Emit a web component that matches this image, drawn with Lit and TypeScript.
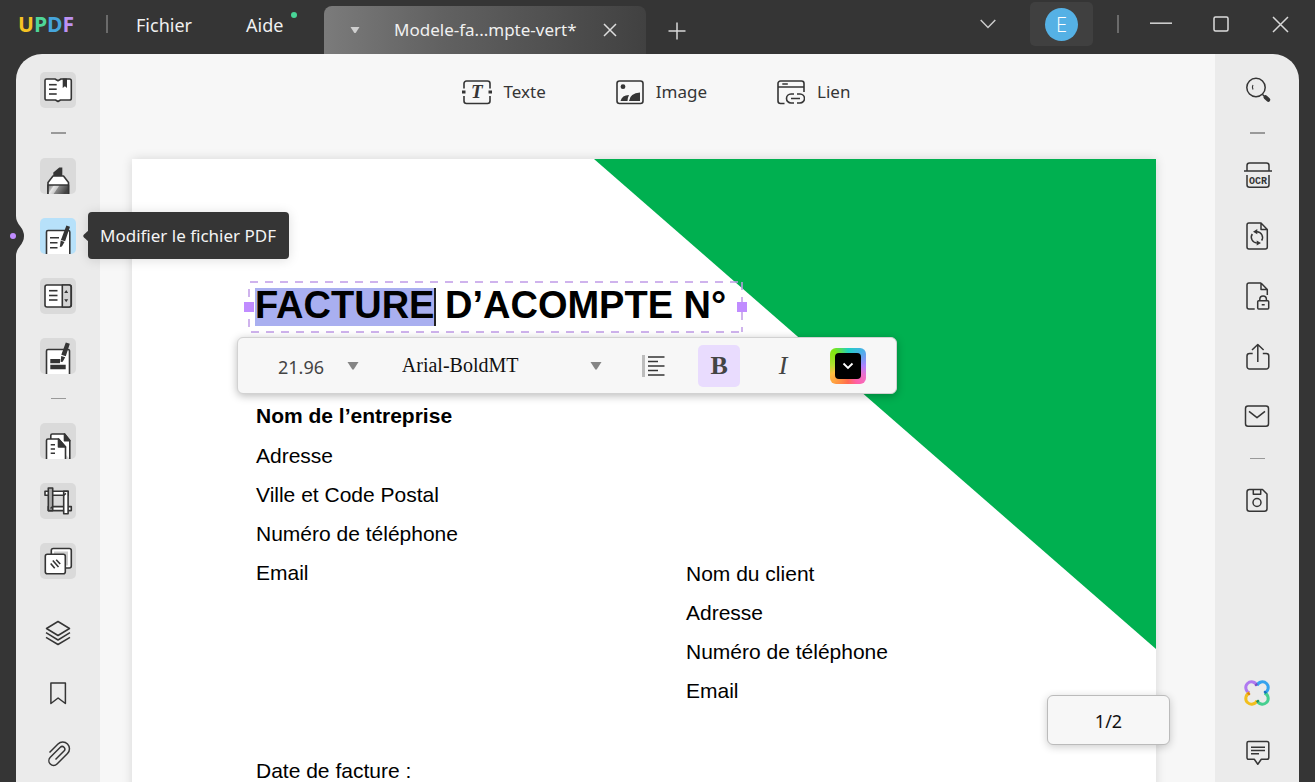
import { LitElement, html, css, svg, SVGTemplateResult, TemplateResult } from "lit";
import { customElement, property } from "lit/decorators.js";
import { classMap } from "lit/directives/class-map.js";

const pageLines = (x2: number, ys: number[], x1 = 9) =>
  ys.map((y) => svg`<path d="M${x1} ${y}H${x2}" />`);

const icons: Record<string, SVGTemplateResult> = {
  reader: svg`
    <path fill="#fff" d="M6.500 7H15l3 1.800L21 7h8.500a1.800 1.800 0 0 1 1.800 1.800v17.400A1.800 1.800 0 0 1 29.500 28H20.500L18 29.500 15.500 28H6.500a1.500 1.500 0 0 1-1.500-1.500v-18A1.500 1.500 0 0 1 6.500 7z" />
    <path fill="currentColor" stroke="none" d="M22.700 6.500h4.300v9.500l-2.100-1.800-2.200 1.800z" />
    ${pageLines(16.7, [12.7, 17.2, 22])}`,
  highlight: svg`
    <defs><linearGradient id="pen-body" x1="0" y1="0" x2="1" y2=".3">
      <stop offset="0" stop-color="#777" /><stop offset=".25" stop-color="#bbb" />
      <stop offset=".3" stop-color="#e8e8e8" /><stop offset=".5" stop-color="#ccc" />
      <stop offset=".55" stop-color="#888" /><stop offset="1" stop-color="#444" />
    </linearGradient></defs>
    <path fill="#fff" d="M8 36V24.500l5-6.500h10.500l5 6.500V36" />
    <path fill="url(#pen-body)" d="M8 36v-9h20.500v9" />
    <path fill="currentColor" stroke="none" d="M13.300 18v-3.500L19.300 9.500h3V18z" />`,
  edit: svg`
    <path fill="#fff" d="M6.500 36V14A1.500 1.500 0 0 1 8 12.500h20.300a1.500 1.500 0 0 1 1.500 1.500v22" />
    <path d="M10 19.700h9M10 24.700h7.500M10 29.700h7.500" />
    <path fill="currentColor" stroke="none" d="M26.400 7.600l3.600 1.100-4.900 14.600-4.200-1.400zM20.700 22.600l3.800 1.300-2.600 4.700-2.100.4z" />`,
  form: svg`
    <rect x="5" y="7" width="26.300" height="22" rx="2" fill="#fff" />
    <path fill="#d4d4d4" d="M22.300 7H29a2 2 0 0 1 2 2v18a2 2 0 0 1-2 2h-6.700z" />
    ${pageLines(17.5, [12.7, 17.5, 22])}
    <path fill="currentColor" stroke="none" d="M24.200 15l2-3 2 3zM24.200 21.300l2 3 2-3z" />`,
  redact: svg`
    <path fill="#fff" d="M6.500 36V13A1.500 1.500 0 0 1 8 11.500h20a1.500 1.500 0 0 1 1.500 1.500v23" />
    <path fill="currentColor" stroke="none" d="M10.300 21h10l-.4 4.300h-9.600zM10.300 26.800h15.400v4.500H10.300zM25.800 4.500l4 1.300-4 12.500-4.500-1.500zM21.200 18l4 1.300-2.500 4.500-2 .2z" />`,
  pages: svg`
    <path fill="#fff" d="M10.800 16v-3.500a1.500 1.500 0 0 1 1.500-1.500H24.500l5.300 6.500V36" />
    <path fill="currentColor" d="M24.500 11l5.300 6.700h-5.300z" />
    <path fill="#fff" d="M6.500 36V17.500A1.500 1.500 0 0 1 8 16h10.500l7 8v12" />
    <path fill="currentColor" d="M18.500 16l7 8h-7z" />
    <path d="M10.700 21.700H15M10.700 26H15M10.700 30.300H15" />`,
  crop: svg`
    <path fill="#fff" d="M5 8.300h23.200v3.900H5zM8.300 23.600h23v4h-23z" />
    <path fill="#aaa" d="M8.300 5h4.400v22.600H8.300z" />
    <path fill="#fff" d="M23.700 8.300h4.400v22.400h-4.400z" />
    <path d="M10.500 25.500l2.200-2M23.500 12.300l2.400-2" />`,
  background: svg`
    <rect x="11.300" y="5.500" width="20" height="19.500" rx="2" fill="#fff" />
    <rect x="14" y="8.500" width="14" height="14" fill="#ccc" stroke="none" />
    <rect x="5.300" y="11.300" width="20" height="19.500" rx="2" fill="#fff" />
    <path d="M10.700 20.500l4 4.700M12.800 17.500l5.700 6.500M16.200 16.700l4 4.300" />`,
  layers: svg`
    <path d="M18 6.500l11.500 7-11.500 7-11.500-7zM6 17.700L18 25l12-7.300M6 22.300l12 7.200 12-7.200" />`,
  bookmark: svg`<path d="M10.900 7.900h14.500v20.600L18.100 23l-7.200 5.500z" />`,
  attach: svg`
    <path d="M9.500 17.500l8.500-8.500a6.700 6.700 0 0 1 9.500 9.500L17 29a4.700 4.700 0 0 1-6.700-6.700l10-10a2.600 2.600 0 0 1 3.700 3.700l-8.500 8.500" />`,
  search: svg`
    <circle cx="17" cy="15.500" r="9.200" />
    <path stroke-width="1.200" d="M14 13q-1.300 2 0 4.500" />
    <path d="M23.500 22.500l3 2.700" />
    <path stroke-width="4" stroke-linecap="round" d="M26.500 25.200l2.800 2.600" />`,
  ocr: svg`
    <path d="M8 12.700V7.500a2.500 2.500 0 0 1 2.500-2.500h17a2.500 2.500 0 0 1 2.500 2.500v5.200M5 12.900h28M8 17v9.700a2.500 2.500 0 0 0 2.500 2.500h17a2.500 2.500 0 0 0 2.500-2.500V17" />
    <text class="glyph ocr" x="19" y="26" text-anchor="middle">OCR</text>`,
  convert: svg`
    <path d="M22 5H10a2 2 0 0 0-2 2v22a2 2 0 0 0 2 2h16.300a2 2 0 0 0 2-2V11.500zM22 5v6.500h6.300" />
    <path d="M18 13.700a5.700 5.700 0 0 1 4.600 8.800M13.300 16a5.700 5.700 0 0 0 4.500 8.900" />
    <path fill="currentColor" stroke="none" d="M14 13.700l4.300-2.600v5.200zM22 25l-4.300-2.600v5.200z" />`,
  protect: svg`
    <path d="M22 5H10a2 2 0 0 0-2 2v22a2 2 0 0 0 2 2h5.700M22 5v6.500h6.300M22 5l6.300 6.500V17" />
    <rect x="18.700" y="22.700" width="11" height="8.300" rx="1" />
    <path d="M20.800 22.700v-1.500a3.300 3.300 0 0 1 6.600 0v1.500M22.700 26.700h3" />`,
  share: svg`
    <path d="M13.700 15.500H10.500A2.500 2.500 0 0 0 8 18v10.500a2.500 2.500 0 0 0 2.500 2.500H27.300a2.500 2.500 0 0 0 2.500-2.500V18a2.500 2.500 0 0 0-2.500-2.500h-3.500M18.800 24V7M13 12l5.800-5.500 5.800 5.500" />`,
  mail: svg`
    <rect x="6.500" y="8" width="23" height="20.300" rx="2.500" />
    <path d="M10 13.300l8 6.400 8-6.400" />`,
  save: svg`
    <path d="M10.500 6.500H23.500L28 11v14.800a2.500 2.500 0 0 1-2.500 2.500h-15A2.500 2.500 0 0 1 8 25.800V9a2.500 2.500 0 0 1 2.500-2.500zM14.300 6.500v4.800h7.400V6.500" />
    <circle cx="18" cy="19.500" r="4" />`,
  assistant: svg`
    <g stroke-width="3">
      <path stroke="#b07af0" d="M18 10.500A5.800 5.800 0 1 0 10.500 18" />
      <path stroke="#36a3ee" d="M25.500 18A5.800 5.800 0 1 0 18 10.500" />
      <path stroke="#46cf90" d="M18 25.500A5.800 5.800 0 1 0 25.500 18" />
      <path stroke="#f2bf1e" d="M10.500 18A5.800 5.800 0 1 0 18 25.500" />
      <path stroke="#7b4fc0" d="M16.500 9l1.500 1.500" /><path stroke="#1670c0" d="M27 16.500l-1.500 1.500" />
      <path stroke="#209060" d="M19.500 27l-1.500-1.500" /><path stroke="#dd8010" d="M9 19.500l1.500-1.500" />
    </g>`,
  comment: svg`
    <path d="M9.500 6.500H28a1.800 1.800 0 0 1 1.800 1.800v14.200a1.800 1.800 0 0 1-1.800 1.800h-5.700l-3.500 5-3.500-5H9.500a1.500 1.500 0 0 1-1.500-1.500V8a1.500 1.500 0 0 1 1.500-1.500zM12 12.300h14M12 15.500h14M12 18.700h8" />`,
};

const railIcon = (name: string) => html`
  <svg class="icon" viewBox="0 0 36 36" width="36" height="36" aria-hidden="true">${icons[name]}</svg>`;

interface Tool { icon: string; label: string; }
const BREAK = "break";
type Entry = Tool | typeof BREAK | "thin";

@customElement("tool-rail")
export class ToolRail extends LitElement {
  @property({ attribute: false }) entries: Entry[] = [];
  @property({ attribute: false }) footer: Tool[] = [];
  @property({ type: Boolean }) filled = false;
  @property() active = "";

  static styles = css`
    :host { display: flex; flex-direction: column; justify-content: space-between; align-items: center;
      padding: 18px 0 11px; background: #ebebeb; box-sizing: border-box; }
    .group { display: flex; flex-direction: column; align-items: center; gap: 24px; }
    .tool { position: relative; width: 36px; height: 36px; padding: 0; border: 0; border-radius: 5px;
      background: none; color: #353535; }
    .filled { background: #dadada; }
    .filled .icon { stroke-width: 1.600; }
    .active { background: #b7e1fa; }
    .icon { display: block; fill: none; stroke: currentColor; stroke-width: 1.500; stroke-linejoin: round; }
    .glyph { fill: currentColor; stroke: none; }
    .ocr { font: 700 10px "Liberation Mono", monospace; }
    .rule { width: 15px; height: 2px; margin: 0; border: 0; background: #999; }
    .thin { height: 1px; }
    .tip { position: absolute; z-index: 5; left: 48px; top: -6px; height: 47px; padding: 1px 13px 0 12px;
      box-sizing: border-box; display: flex; align-items: center; border-radius: 4px; background: #353535; color: #f4f4f4;
      font: 17px/24px "Noto Sans", sans-serif; white-space: nowrap; box-shadow: 0 1px 12px #0002; }
    .arrow { position: absolute; left: -5px; top: 18px; }
    .notch { position: absolute; left: -32px; top: -2px; }
  `;

  private tool(t: Tool): TemplateResult {
    const on = t.icon === this.active;
    return html`<button class=${classMap({ tool: true, filled: this.filled && this.entries.includes(t), active: on })}
      aria-label=${t.label}>
      ${railIcon(t.icon)}
      ${on ? html`
        <svg class="notch" width="16" height="40" viewBox="0 0 16 40" aria-hidden="true">
          <path fill="#353535" d="M0 0h8q0 5 4 10 4 5 4 10t-4 10q-4 5-4 10H0z" />
          <circle cx="5" cy="20" r="3" fill="#c08cff" /></svg>
        <span class="tip" role="tooltip">
          <svg class="arrow" width="6" height="12" viewBox="0 0 6 12" aria-hidden="true"><path fill="#353535" d="M6 0v12L1 7.500q-1.500-1.500 0-3z" /></svg>
          ${t.label}</span>` : ""}
    </button>`;
  }

  render() {
    return html`
      <div class="group">${this.entries.map((e) =>
        typeof e === "string" ? html`<hr class=${classMap({ rule: true, thin: e === "thin" })} />` : this.tool(e))}</div>
      <div class="group">${this.footer.map((t) => this.tool(t))}</div>`;
  }
}

@customElement("format-bar")
export class FormatBar extends LitElement {
  static styles = css`
    :host { display: flex; align-items: center; width: 660px; height: 57px; box-sizing: border-box; padding: 0 30px 0 40px;
      border: 1px solid #d2d2d2; border-radius: 6px; background: #f7f7f7; box-shadow: 0 2px 8px #0004; }
    .pick { display: flex; align-items: center; }
    .size { width: 81px; }
    .font { width: 201px; margin-left: 43px; }
    .choice { appearance: none; flex: 1; min-width: 0; border: 0; padding: 2px 0 0; background: none; color: #444;
      font: 18px/24px "Noto Sans", sans-serif; }
    .family { color: #111; font: 20px/24px "Liberation Serif", serif; padding: 0 0 2px; }
    button { border: 0; padding: 0; background: none; color: #444; display: grid; place-items: center; }
    .align { margin-left: 39px; width: 24px; height: 42px; }
    .style { width: 42px; height: 42px; border-radius: 5px; font: 700 26px/42px "Liberation Serif", serif; }
    .bold { margin-left: 33px; background: #e9dcfe; }
    .italic { margin-left: 22px; font-weight: 400; font-style: italic; }
    .colour { margin-left: 26px; width: 36px; height: 36px; border-radius: 6px;
      background: conic-gradient(#20d0c0, #48b0e8 12%, #b080ff 25%, #f070c8 34%, #ff5fa8 42%, #ff6a50 50%, #ff9a40 60%, #ffc040 68%, #b0e030 76%, #80e810 88%, #20d0c0); }
    .ink { display: grid; place-items: center; width: 26px; height: 26px; border-radius: 4px; background: #000; }
  `;
  private caret() {
    return html`<svg width="12" height="8" viewBox="0 0 12 8" aria-hidden="true"><path fill="#858585" d="M.5 0h11L7 7q-1 1.500-2 0z" /></svg>`;
  }
  render() {
    return html`
      <label class="pick size"><select class="choice" aria-label="Taille"><option>21.96</option></select>${this.caret()}</label>
      <label class="pick font"><select class="choice family" aria-label="Police"><option>Arial-BoldMT</option></select>${this.caret()}</label>
      <button class="align" aria-label="Alignement"><svg width="24" height="24" viewBox="0 0 24 24" fill="none" stroke="#353535" stroke-width="1.500">
        <path stroke="#bdbdbd" stroke-width="3" d="M2.500 1v22" />
        <path d="M7 3h16.500M7 7.500h10M7 12h16.500M7 16.500h10M7 21h16.500" /></svg></button>
      <button class="style bold" aria-label="Gras" aria-pressed="true">B</button>
      <button class="style italic" aria-label="Italique">I</button>
      <button class="colour" aria-label="Couleur"><span class="ink"><svg width="12" height="8" viewBox="0 0 12 8" fill="none" stroke="#fff" stroke-width="1.800"><path d="M1.500 1.500L6 6l4.500-4.500" /></svg></span></button>`;
  }
}

@customElement("app-root")
export class AppRoot extends LitElement {
  static styles = css`
    :host { display: flex; flex-direction: column; height: 100vh; overflow: hidden; background: #353535;
      font: 18px/24px "Noto Sans", sans-serif; }
    button { border: 0; padding: 0; background: none; font: inherit; color: inherit; }
    svg { display: block; }

    .titlebar { display: flex; height: 54px; flex: none; color: #f0f0f0; }
    .left, .right { display: flex; align-items: center; height: 48px; }
    .left { padding-left: 18px; width: 324px; box-sizing: border-box; }
    .logo { width: 88px; flex: none; font: 700 21px/20px "Open Sans", sans-serif; }
    .u { color: #f5c223; } .p { color: #4fd598; } .d { color: #46a5dc; } .f { color: #bd92f2; }
    .bar { width: 2px; height: 18px; flex: none; background: #6b6b6b; }
    .menu { position: relative; white-space: nowrap; padding-top: 2px; }
    .file { margin-left: 28px; }
    .help { margin-left: 54px; }
    .dot { position: absolute; right: -14px; top: 1px; width: 6px; height: 6px; border-radius: 50%; background: #48d597; }
    .tab { display: flex; align-items: center; box-sizing: border-box; width: 322px; height: 48px;
      margin-top: 6px; padding: 0 29px 0 26px; border-radius: 8px 8px 0 0; font-size: 17px;
      background: linear-gradient(90deg, #7b7b7b, #626262 35%, #414141); }
    .name { margin-left: 34px; flex: 1; white-space: nowrap; }
    .plus { margin: 22px 0 0 22px; align-self: flex-start; }
    .right { margin-left: auto; padding-right: 26px; }
    .profile { display: grid; place-items: center; width: 63px; height: 44px; margin: 0 24px 0 34px; border-radius: 5px; background: #404040; }
    .avatar { width: 33px; height: 33px; border-radius: 50%; background: #55b1e5; color: #fff; font: 300 20px/34px "Open Sans", sans-serif; text-align: center; }
    .min { margin-left: 31px; } .max { margin-left: 41px; } .close { margin-left: 43px; }

    .shell { display: grid; grid-template-columns: 84px 1fr 84px; flex: 1; min-height: 0; margin: 0 16px; }
    .rail-left { border-radius: 26px 0 0 0; z-index: 2; }
    .rail-right { border-radius: 0 26px 0 0; z-index: 2; }
    main { position: relative; min-width: 0; overflow: hidden; background: #f7f7f7; }
    .inserts { display: flex; justify-content: center; gap: 70px; height: 76px; margin-bottom: 29px; padding-right: 3px; color: #353535; }
    .insert { display: flex; align-items: center; gap: 12px; font-size: 17px; }
    .insert svg { fill: none; stroke: currentColor; stroke-width: 1.600; }
    .insert .script { fill: currentColor; stroke: none; font: italic 700 19px "Liberation Serif", serif; }

    .page { position: relative; min-height: 1400px; margin: 0 59px 0 32px; padding: 123px 0 0 124px; box-sizing: border-box;
      background: #fff; box-shadow: 0 0 10px #0002; color: #000; font: 21px/39px "Liberation Sans", sans-serif; }
    .wedge { position: absolute; right: 0; top: 0; }
    .box { position: relative; width: 494px; height: 50px; margin-left: -7px; }
    .frame { position: absolute; left: 0; top: 0; overflow: visible; }
    h1 { position: relative; margin: 0; padding: 4px 0 0 6px; font: 700 38px/38px "Liberation Sans", sans-serif; white-space: nowrap; }
    .picked { display: inline-block; height: 38px; background: #a9aff0; border-right: 2px solid #222; margin-right: -2px; line-height: 34px; }
    .format { position: absolute; z-index: 3; left: -12px; top: 55px; }
    h2 { margin: 64px 0 0; font: 700 21px/40px "Liberation Sans", sans-serif; }
    p { margin: 0; }
    .client { margin: -38px 0 0 430px; }
    .date { margin-top: 41px; }
    .pager { position: absolute; right: 45px; bottom: 37px; width: 123px; height: 50px; box-sizing: border-box; border: 1px solid #bbb;
      border-radius: 6px; padding-top: 2px; background: #f7f7f7; color: #111; box-shadow: 0 2px 8px #0003; }
  `;

  private leftTools: Entry[] = [
    { icon: "reader", label: "Lecteur" }, BREAK,
    { icon: "highlight", label: "Commentaire" },
    { icon: "edit", label: "Modifier le fichier PDF" },
    { icon: "form", label: "Formulaire" },
    { icon: "redact", label: "Censurer" }, "thin",
    { icon: "pages", label: "Organiser les pages" },
    { icon: "crop", label: "Recadrer" },
    { icon: "background", label: "Outils de page" },
  ];
  private leftFooter: Tool[] = [
    { icon: "layers", label: "Calques" }, { icon: "bookmark", label: "Signets" }, { icon: "attach", label: "Pièces jointes" },
  ];
  private rightTools: Entry[] = [
    { icon: "search", label: "Rechercher" }, BREAK,
    { icon: "ocr", label: "Reconnaissance de texte" },
    { icon: "convert", label: "Convertir" },
    { icon: "protect", label: "Protéger" },
    { icon: "share", label: "Partager" },
    { icon: "mail", label: "Envoyer" }, "thin",
    { icon: "save", label: "Enregistrer" },
  ];
  private rightFooter: Tool[] = [{ icon: "assistant", label: "Assistant" }, { icon: "comment", label: "Commentaires" }];

  render() {
    return html`
      <header class="titlebar">
        <div class="left">
          <span class="logo"><span class="u">U</span><span class="p">P</span><span class="d">D</span><span class="f">F</span></span>
          <span class="bar"></span>
          <button class="menu file">Fichier</button>
          <button class="menu help">Aide<span class="dot"></span></button>
        </div>
        <div class="tab">
          <svg width="10" height="7" viewBox="0 0 10 7" aria-hidden="true"><path fill="#d0d0d0" d="M.5 0h9L6 5.500q-1 1-2 0z" /></svg>
          <span class="name">Modele-fa...mpte-vert*</span>
          <button aria-label="Fermer l'onglet"><svg width="14" height="14" viewBox="0 0 14 14" stroke="#ddd" stroke-width="1.500"><path d="M1 1l12 12M13 1L1 13" /></svg></button>
        </div>
        <button class="plus" aria-label="Nouvel onglet"><svg width="18" height="18" viewBox="0 0 18 18" stroke="#d8d8d8" stroke-width="1.500"><path d="M9 .5v17M.5 9h17" /></svg></button>
        <div class="right">
          <button aria-label="Onglets"><svg width="16" height="10" viewBox="0 0 16 10" fill="none" stroke="#ccc" stroke-width="1.500"><path d="M.7 1L8 8.500 15.300 1" /></svg></button>
          <button class="profile" aria-label="Compte"><span class="avatar">E</span></button>
          <span class="bar"></span>
          <button class="min" aria-label="Réduire"><svg width="22" height="10" viewBox="0 0 22 10" stroke="#ccc" stroke-width="1.600"><path d="M0 4.200h22" /></svg></button>
          <button class="max" aria-label="Agrandir"><svg width="16" height="16" viewBox="0 0 16 16" fill="none" stroke="#ddd" stroke-width="1.500"><rect x="1" y="1" width="14" height="14" rx="1.500" /></svg></button>
          <button class="close" aria-label="Fermer"><svg width="17" height="17" viewBox="0 0 17 17" stroke="#d8d8d8" stroke-width="1.500"><path d="M1 1l15 15M16 1L1 16" /></svg></button>
        </div>
      </header>
      <div class="shell">
        <tool-rail class="rail-left" filled active="edit" .entries=${this.leftTools} .footer=${this.leftFooter}></tool-rail>
        <main>
          <nav class="inserts">
            <button class="insert"><svg width="30" height="28" viewBox="0 0 30 28">
              <path d="M2 10.500V5.500a2.500 2.500 0 0 1 2.500-2.500h21A2.500 2.500 0 0 1 28 5.500v5M2 18v5a2.500 2.500 0 0 0 2.500 2.500h21A2.500 2.500 0 0 0 28 23v-5" />
              <path stroke-width="3" d="M0 14h3.500M26.500 14H30" />
              <text class="script" x="9" y="20">T</text></svg>Texte</button>
            <button class="insert"><svg width="28" height="28" viewBox="0 0 28 28">
              <rect x="1" y="3" width="26" height="22.500" rx="2.500" />
              <circle cx="7" cy="8.700" r="2.400" fill="currentColor" stroke="none" />
              <path fill="currentColor" stroke="none" d="M4.500 23q1.500-6 8.500-6-1.300 2.500-1.500 6zM13 23q1-8 11-8.500V23z" /></svg>Image</button>
            <button class="insert"><svg width="28" height="28" viewBox="0 0 28 28">
              <path d="M7.500 25.500H3.500A2.500 2.500 0 0 1 1 23V5.500A2.500 2.500 0 0 1 3.500 3h21A2.500 2.500 0 0 1 27 5.500V14M1 9h26M5.300 6h5.500" />
              <path d="M17 16h-3a4.500 4.500 0 0 0 0 9h3M20 16h3a4.500 4.500 0 0 1 0 9h-3M14 20.500h9" /></svg>Lien</button>
          </nav>
          <article class="page">
            <svg class="wedge" width="562" height="490" viewBox="0 0 562 490" aria-hidden="true"><path fill="#00b050" d="M0 0h562v490z" /></svg>
            <div class="box">
              <svg class="frame" width="494" height="50" viewBox="0 0 494 50" fill="none" stroke="#c09ae8" stroke-width="1.500" aria-hidden="true">
                <path stroke-dasharray="8 7" d="M1 0h493M2 50h492M0 7v43M493 0v50" />
                <path fill="#c08cff" stroke="none" d="M-5 20H5v10H-5zM488 20h10v10h-10z" /></svg>
              <h1><span class="picked">FACTURE</span> D’ACOMPTE N°</h1>
              <format-bar class="format"></format-bar>
            </div>
            <h2>Nom de l’entreprise</h2>
            <p>Adresse</p>
            <p>Ville et Code Postal</p>
            <p>Numéro de téléphone</p>
            <p>Email</p>
            <section class="client">
              <p>Nom du client</p>
              <p>Adresse</p>
              <p>Numéro de téléphone</p>
              <p>Email</p>
            </section>
            <p class="date">Date de facture :</p>
          </article>
          <button class="pager">1/2</button>
        </main>
        <tool-rail class="rail-right" .entries=${this.rightTools} .footer=${this.rightFooter}></tool-rail>
      </div>`;
  }
}
